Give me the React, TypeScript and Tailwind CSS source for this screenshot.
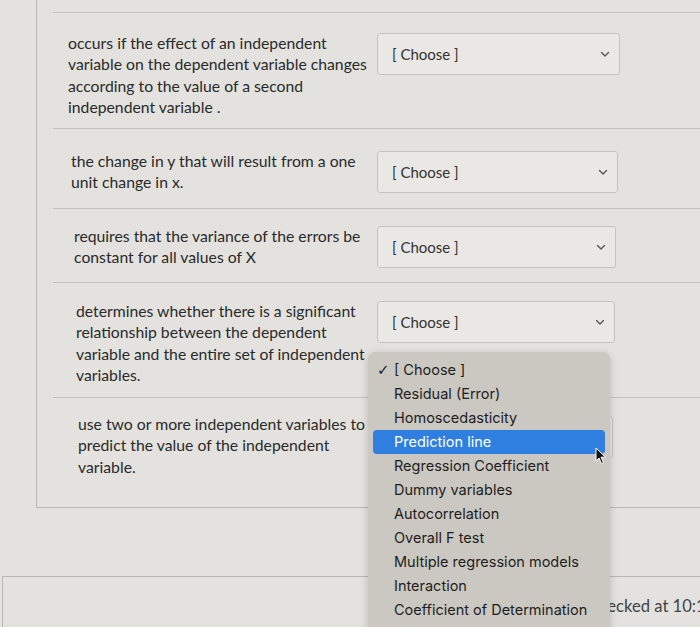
import React from 'react';

interface Row {
  text: string;
  height: string;
  pad: string;
  indent: string;
  selectW: string;
  selectTop: string;
}

const rows: Row[] = [
  {
    text: 'occurs if the effect of an independent variable on the dependent variable changes according to the value of a second independent variable .',
    height: 'h-[116px]',
    pad: 'pt-[20px]',
    indent: 'ml-[15px]',
    selectW: 'w-[243px]',
    selectTop: 'mt-0',
  },
  {
    text: 'the change in y that will result from a one unit change in x.',
    height: 'h-[80px]',
    pad: 'pt-[22px]',
    indent: 'ml-[18px]',
    selectW: 'w-[241px]',
    selectTop: 'mt-0',
  },
  {
    text: 'requires that the variance of the errors be constant for all values of X',
    height: 'h-[74px]',
    pad: 'pt-[17px]',
    indent: 'ml-[21px]',
    selectW: 'w-[239px]',
    selectTop: 'mt-0',
  },
  {
    text: 'determines whether there is a significant relationship between the dependent variable and the entire set of independent variables.',
    height: 'h-[115px]',
    pad: 'pt-[18px]',
    indent: 'ml-[23px]',
    selectW: 'w-[238px]',
    selectTop: 'mt-0',
  },
  {
    text: 'use two or more independent variables to predict the value of the independent variable.',
    height: 'h-[110px]',
    pad: 'pt-[16px]',
    indent: 'ml-[25px]',
    selectW: 'w-[236px]',
    selectTop: 'mt-[2px]',
  },
];

const options = [
  '[ Choose ]',
  'Residual (Error)',
  'Homoscedasticity',
  'Prediction line',
  'Regression Coefficient',
  'Dummy variables',
  'Autocorrelation',
  'Overall F test',
  'Multiple regression models',
  'Interaction',
  'Coefficient of Determination',
];

const Chevron = () => (
  <svg width="10" height="7" viewBox="0 0 10 7" fill="none">
    <path d="M1.5 1.5 L5 5 L8.5 1.5" stroke="#555" strokeWidth="1.4" strokeLinecap="round" strokeLinejoin="round" />
  </svg>
);

const FakeSelect = ({ width, extra }: { width: string; extra: string }) => (
  <div
    className={`${width} h-[42px] shrink-0 bg-[#e9e8e5] border border-[#c4c3c0] rounded-[3px] flex items-center justify-between pl-[14px] pr-[9px] ${extra}`}
  >
    <span className="text-[15px] text-[#333]">[ Choose ]</span>
    <Chevron />
  </div>
);

export default function App() {
  return (
    <div className="relative w-[700px] h-[627px] overflow-hidden bg-[#e3e2df] font-['Lato','Liberation_Sans',sans-serif]">
      {/* question list */}
      <div className="ml-[36px] h-[508px] pt-[12px] border-l border-b border-[#b8b7b3]">
        {rows.map((row, i) => (
          <div
            key={i}
            className={`ml-[16px] flex items-start border-t border-[#c2c1bd] ${row.height} ${row.pad}`}
          >
            <div className="w-[324px] shrink-0">
              <div className={`${row.indent} w-[304px] text-[15.75px] leading-[21.3px] text-[#2a2a2a] -mt-[1px]`}>
                {row.text}
              </div>
            </div>
            <FakeSelect width={row.selectW} extra={row.selectTop} />
          </div>
        ))}
      </div>

      {/* footer bar */}
      <div className="mt-[68px] ml-[2px] h-[60px] border-t border-l border-[#b8b7b3] pt-[17px] whitespace-nowrap">
        <span className="ml-[553px] text-[16.6px] text-[#444]">Last checked at 10:13</span>
      </div>

      {/* open dropdown menu */}
      <div className="absolute left-[368px] top-[352px] w-[242px] h-[290px] rounded-[7px] bg-[#cbc7c1] shadow-[0_2px_8px_rgba(0,0,0,0.18)] pt-[6px] px-[5px] font-['Inter','Noto_Sans',sans-serif]">
        {options.map((opt, i) => {
          const hi = opt === 'Prediction line';
          return (
            <div
              key={opt}
              className={`h-[24px] flex items-center rounded-[4px] text-[14.5px] ${hi ? 'bg-[#2f7fe0] text-white' : 'text-[#1e1e1e]'}`}
            >
              <span className="w-[21px] shrink-0 pl-[4px] text-[15px] font-bold font-['DejaVu_Sans',sans-serif]">
                {i === 0 ? '✓' : ''}
              </span>
              <span>{opt}</span>
            </div>
          );
        })}
      </div>

      {/* mouse pointer */}
      <svg className="absolute left-[595px] top-[447px]" width="12" height="18" viewBox="0 0 12 18">
        <path d="M1 1 L1 14 L4 11 L6.5 16.5 L8.5 15.5 L6 10.2 L10.5 10.2 Z" fill="#111" stroke="#fff" strokeWidth="1" strokeLinejoin="round" />
      </svg>
    </div>
  );
}
